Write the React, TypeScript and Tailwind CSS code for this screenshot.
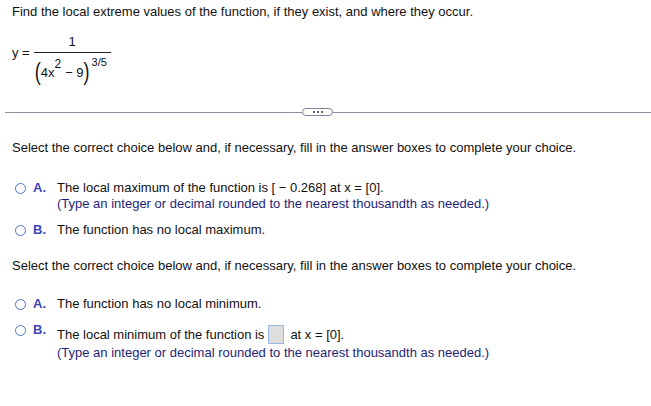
const hint = "text-[#1e1e78]";

function Radio({ label }: { label: string }) {
  return (
    <div className="flex h-[16px] w-[57px] shrink-0 items-center pl-[15px]">
      <span className="h-[11px] w-[11px] rounded-full border-[1.5px] border-[#4a73cf]" />
      <span className="ml-[7px] font-bold text-[#3d47b3]">{label}</span>
    </div>
  );
}

function Choice({ label, children }: { label: string; children: React.ReactNode }) {
  return (
    <div className="flex">
      <Radio label={label} />
      <div>{children}</div>
    </div>
  );
}

function Prompt() {
  return <p className="pl-[12px] leading-[16px]">Select the correct choice below and, if necessary, fill in the answer boxes to complete your choice.</p>;
}

export default function App() {
  return (
    <div className="h-[406px] w-[651px] overflow-hidden bg-white font-['Liberation_Sans',Arial,sans-serif] text-[13px] text-[#111]">
      <p className="pl-[12px] pt-[4px] leading-[16px]">
        Find the local extreme values of the function, if they exist, and where they occur.
      </p>

      {/* equation */}
      <div className="mt-[14px] flex items-start pl-[12px]">
        <span className="mt-[11px] leading-[16px]">y =</span>
        <div className="ml-[4px] flex flex-col">
          <div className="text-center leading-[16px]">1</div>
          <div className="mt-[2px] h-px w-[77px] bg-[#222]" />
          <div className="flex h-[30px] items-start pl-[1px]">
            <span className="mt-[9px] inline-block scale-y-[1.35] text-[18px] font-light leading-[20px]">(</span>
            <span className="mt-[12px] leading-[16px]">4x</span>
            <span className="mt-[4px] text-[12px] leading-[14px]">2</span>
            <span className="ml-[4px] mt-[12px] leading-[16px]">− 9</span>
            <span className="mt-[9px] inline-block scale-y-[1.35] text-[18px] font-light leading-[20px]">)</span>
            <span className="ml-[2px] mt-[2px] text-[11px] leading-[14px]">3/5</span>
          </div>
        </div>
      </div>

      {/* divider */}
      <div className="mt-[25px] flex h-[8px] items-center pl-[5px]">
        <div className="h-px w-[297px] bg-[#8a93a3]" />
        <div className="flex h-[8px] w-[31px] items-center justify-center gap-[2px] rounded-full border border-[#7d8799] bg-white">
          <span className="h-[2px] w-[2px] bg-[#5a6474]" />
          <span className="h-[2px] w-[2px] bg-[#5a6474]" />
          <span className="h-[2px] w-[2px] bg-[#5a6474]" />
        </div>
        <div className="h-px flex-1 bg-[#8a93a3]" />
      </div>

      <div className="mt-[24px]">
        <Prompt />
      </div>

      <div className="mt-[24px]">
        <Choice label="A.">
          <div className="leading-[16px]">The local maximum of the function is [ − 0.268] at x = [0].</div>
          <div className={`leading-[15px] ${hint}`}>(Type an integer or decimal rounded to the nearest thousandth as needed.)</div>
        </Choice>
      </div>
      <div className="mt-[11px]">
        <Choice label="B.">
          <div className="leading-[16px]">The function has no local maximum.</div>
        </Choice>
      </div>

      <div className="mt-[20px]">
        <Prompt />
      </div>

      <div className="mt-[22px]">
        <Choice label="A.">
          <div className="leading-[16px]">The function has no local minimum.</div>
        </Choice>
      </div>
      <div className="mt-[13px] flex">
        <div className="mt-[-3px]">
          <Radio label="B." />
        </div>
        <div>
          <div className="flex h-[19px] items-center leading-[16px]">
            <span>The local minimum of the function is</span>
            <span className="ml-[4px] h-[19px] w-[16px] border border-[#98b6e6] bg-[#dedede]" />
            <span className="ml-[6px]">at x = [0].</span>
          </div>
          <div className={`mt-[1px] leading-[16px] ${hint}`}>(Type an integer or decimal rounded to the nearest thousandth as needed.)</div>
        </div>
      </div>
    </div>
  );
}
